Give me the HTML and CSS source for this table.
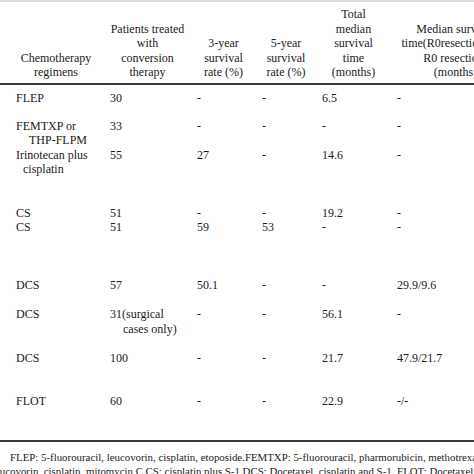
FILE: index.html
```
<!DOCTYPE html>
<html>
<head>
	<title>Conversion therapy regimens</title>
	<link rel="stylesheet" href="styles.css">
</head>
<body>
	<div class="sheet">
		<div class="topbar"></div>
		<table class="regimens">
			<colgroup>
				<col class="c1">
				<col class="c2">
				<col class="c3">
				<col class="c4">
				<col class="c5">
				<col class="c6">
			</colgroup>
			<thead>
				<tr>
					<th class="first">Chemotherapy<br>regimens</th>
					<th>Patients treated<br>with<br>conversion<br>therapy</th>
					<th>3-year<br>survival<br>rate (%)</th>
					<th>5-year<br>survival<br>rate (%)</th>
					<th>Total<br>median<br>survival<br>time<br>(months)</th>
					<th>Median survival<br>time(R0resection/non-<br>R0 resection)<br>(months)</th>
				</tr>
			</thead>
			<tbody>
				<tr class="lead l2">
					<td>FLEP</td><td>30</td><td>-</td><td>-</td><td>6.5</td><td>-</td>
				</tr>
				<tr class="l2">
					<td>FEMTXP or<br><span class="hang">THP-FLPM</span></td><td>33</td><td>-</td><td>-</td><td>-</td><td>-</td>
				</tr>
				<tr class="l4">
					<td>Irinotecan plus<br><span class="hang small">cisplatin</span></td><td>55</td><td>27</td><td>-</td><td>14.6</td><td>-</td>
				</tr>
				<tr class="l1">
					<td>CS</td><td>51</td><td>-</td><td>-</td><td>19.2</td><td>-</td>
				</tr>
				<tr class="l4">
					<td>CS</td><td>51</td><td>59</td><td>53</td><td>-</td><td>-</td>
				</tr>
				<tr class="l2">
					<td>DCS</td><td>57</td><td>50.1</td><td>-</td><td>-</td><td>29.9/9.6</td>
				</tr>
				<tr class="l3">
					<td>DCS</td><td>31(surgical<br><span class="hang">cases only)</span></td><td>-</td><td>-</td><td>56.1</td><td>-</td>
				</tr>
				<tr class="l3">
					<td>DCS</td><td>100</td><td>-</td><td>-</td><td>21.7</td><td>47.9/21.7</td>
				</tr>
				<tr class="last l3">
					<td>FLOT</td><td>60</td><td>-</td><td>-</td><td>22.9</td><td>-/-</td>
				</tr>
			</tbody>
		</table>
		<div class="notes">
			<p class="note1">FLEP: 5-fluorouracil, leucovorin, cisplatin, etoposide.FEMTXP: 5-fluorouracil, pharmorubicin, methotrexate. THP-FLPM: pirarubicin, 5-fluorouracil,</p>
			<p class="note2">leucovorin, cisplatin, mitomycin C.CS: cisplatin plus S-1.DCS: Docetaxel, cisplatin and S-1. FLOT: Docetaxel, oxaliplatin, leucovorin and 5-fluorouracil.</p>
		</div>
	</div>
</body>
</html>
```

FILE: styles.css
```
*{
	padding:0;
	margin:0;
}
body{
	background:#fff;
	overflow:hidden;
	font-family:"Liberation Serif", "Times New Roman", serif;
	color:#1a1a1a;
}
.sheet{
	width:520px;
}
.topbar{
	height:2px;
	background-color:#dadada;
}

.regimens{
	width:520px;
	table-layout:fixed;
	border-collapse:collapse;
	font-size:12px;
	line-height:14.5px;
}
.c1{width:104px;}
.c2{width:87px;}
.c3{width:65px;}
.c4{width:60px;}
.c5{width:75px;}
.c6{width:129px;}

.regimens th{
	font-weight:normal;
	text-align:center;
	vertical-align:bottom;
	padding:5px 6px 3px;
	white-space:nowrap;
	border-bottom:2px solid #3a3a3a;
}
.regimens th.first{
	padding-left:8px;
	padding-right:0;
}

.regimens td{
	text-align:left;
	vertical-align:top;
	padding:0 6px;
	white-space:nowrap;
}
.regimens td:first-child{
	padding-left:16px;
}

.hang{
	display:inline-block;
	padding-left:13px;
}
.hang.small{
	padding-left:7px;
}

.l1{height:14.5px;}
.l2{height:29px;}
.l3{height:43.5px;}
.l4{height:58px;}

.regimens tr.lead{height:35px;}
.regimens tr.lead td{padding-top:6px;}
.regimens tr.last{height:47px;}
.regimens tr.last td{border-bottom:2px solid #3a3a3a;}

.notes{
	padding-top:9px;
	font-size:10.85px;
	line-height:13.5px;
	color:#222;
	white-space:nowrap;
}
.note1{
	margin-left:10px;
}
.note2{
	margin-left:-8px;
}
```
